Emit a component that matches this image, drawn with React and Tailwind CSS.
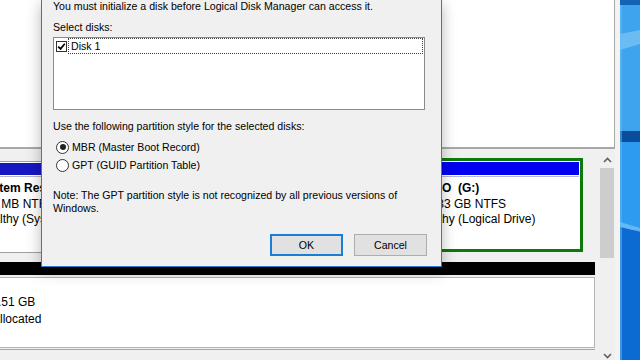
function Chevron({ down }) {
  return (
    <svg width="9" height="6" viewBox="0 0 9 6" className="block">
      <path
        d={down ? "M1 1 L4.5 4.5 L8 1" : "M1 5 L4.5 1.5 L8 5"}
        fill="none"
        stroke="#606060"
        strokeWidth="1.6"
      />
    </svg>
  );
}

function Desktop() {
  return (
    <svg width="20" height="360" viewBox="0 0 20 360" className="block">
      <rect width="20" height="360" fill="#0a62c4" />
      <rect y="0" width="20" height="5" fill="#1463b4" />
      <rect y="5" width="20" height="126" fill="#3fa4ee" />
      <polygon points="0,34 20,30 20,44 0,50" fill="#8fd0f8" opacity="0.55" />
      <rect y="131" width="20" height="11" fill="#0b4d9d" />
      <rect y="142" width="20" height="88" fill="#2d9bef" />
      <polygon points="0,222 20,228 20,232 0,227" fill="#7cc6f6" opacity="0.7" />
      <polygon points="0,227 20,232 20,360 0,360" fill="#0c6bd2" />
      <rect x="0" y="5" width="2" height="355" fill="#6cbcf2" opacity="0.5" />
    </svg>
  );
}

export default function App() {
  return (
    <div className="relative flex h-[360px] w-[640px] overflow-hidden bg-[#f0f0f0] font-['Liberation_Sans',Arial,sans-serif] text-black">
      {/* Disk Management window */}
      <div className="flex h-full w-[620px] shrink-0">
        <div className="flex w-[615px] shrink-0 flex-col">
          <div className="h-[149px] shrink-0 border-b-2 border-r border-[#a8a8a8] bg-white" />
          <div className="flex flex-1">
            <div className="w-[599px] shrink-0 pt-[9px]">
              {/* Disk 0 */}
              <div className="flex h-[94px] gap-[3px] text-[12px] leading-[15.5px]">
                <div className="-ml-[30px] mt-[3px] h-[92px] w-[437px] shrink-0 border border-[#a0a0a0] bg-white p-px">
                  <div className="h-[12px] bg-[#1717c2]" />
                  <div className="mt-px border-t border-[#b8b8b8] pl-[6px] pt-[4px]">
                    <div className="whitespace-nowrap">
                      <div className="font-bold">System Reserved</div>
                      <div>500 MB NTFS</div>
                      <div>Healthy (System, Active, Primary Partition)</div>
                    </div>
                  </div>
                </div>
                <div className="h-[94px] w-[173px] shrink-0 border-[3px] border-[#0b7a0b] bg-white p-px">
                  <div className="h-[13px] bg-[#0000f2]" />
                  <div className="mt-px border-t border-[#b8b8b8] pt-[4px]">
                    <div className="whitespace-nowrap">
                      <div className="whitespace-pre font-bold">VIDEO  (G:)</div>
                      <div>148.33 GB NTFS</div>
                      <div>Healthy (Logical Drive)</div>
                    </div>
                  </div>
                </div>
              </div>
              {/* Disk 1 */}
              <div className="mt-[10px] -ml-[10px] h-[13px] w-[605px] bg-black" />
              <div className="mt-[2px] -ml-[10px] h-[71px] w-[605px] border border-[#b4b4b4] bg-white text-[12px] leading-[16.5px]">
                <div className="-ml-[13px] whitespace-nowrap pt-[16px]">
                  <div>931.51 GB</div>
                  <div>Unallocated</div>
                </div>
              </div>
              <div className="mt-px h-px w-[595px] bg-[#a8a8a8]" />
            </div>
            {/* Scrollbar */}
            <div className="flex w-[16px] shrink-0 flex-col pt-[2px]">
              <div className="flex h-[17px] items-center justify-center">
                <Chevron />
              </div>
              <div className="mx-px h-[90px] bg-[#cdcdcd]" />
              <div className="mt-[89px] flex h-[17px] items-center justify-center">
                <Chevron down />
              </div>
            </div>
          </div>
        </div>
        <div className="w-[5px] shrink-0 bg-[#f3f3f3]" />
      </div>
      <div className="w-[20px] shrink-0">
        <Desktop />
      </div>

      {/* Initialize Disk dialog */}
      <div className="absolute left-[41px] top-0 h-[267px] w-[401px] border-x border-b border-[#2b7bd3] bg-[#f0f0f0] pl-[11px] text-[10.6px] leading-[13px] shadow-[0_4px_14px_rgba(0,0,0,0.28)]">
        <p className="whitespace-nowrap">
          You must initialize a disk before Logical Disk Manager can access it.
        </p>
        <p className="mt-[8px]">Select disks:</p>
        <div className="mt-[3px] h-[73px] w-[372px] border border-[#8a8a8a] bg-white">
          <div className="flex h-[16px] items-center">
            <div className="ml-[2px] flex h-[11px] w-[11px] shrink-0 items-center justify-center border border-[#333] bg-white">
              <svg width="9" height="9" viewBox="0 0 9 9" className="block">
                <path d="M1.2 4.6 L3.5 6.9 L7.8 1.8" fill="none" stroke="#000" strokeWidth="1.7" />
              </svg>
            </div>
            <div className="ml-px mr-px flex h-[16px] flex-1 items-center border border-dotted border-[#404040] pl-[2px]">
              Disk 1
            </div>
          </div>
        </div>
        <p className="mt-[10px]">Use the following partition style for the selected disks:</p>
        <div className="mt-[5px]">
          <div className="flex h-[18px] items-center">
            <div className="ml-[3px] flex h-[13px] w-[13px] items-center justify-center rounded-full border border-[#333] bg-white">
              <div className="h-[6px] w-[6px] rounded-full bg-[#222]" />
            </div>
            <span className="ml-[3px]">MBR (Master Boot Record)</span>
          </div>
          <div className="flex h-[18px] items-center">
            <div className="ml-[3px] h-[13px] w-[13px] rounded-full border border-[#333] bg-white" />
            <span className="ml-[3px]">GPT (GUID Partition Table)</span>
          </div>
        </div>
        <p className="mt-[15px] whitespace-nowrap">
          Note: The GPT partition style is not recognized by all previous versions of
          <br />
          Windows.
        </p>
        <div className="mt-[19px] flex gap-[11px] pl-[217px]">
          <button className="flex h-[22px] w-[73px] items-center justify-center border-2 border-[#1a7fd4] bg-[#e1e1e1]">
            OK
          </button>
          <button className="flex h-[22px] w-[73px] items-center justify-center border border-[#adadad] bg-[#e1e1e1]">
            Cancel
          </button>
        </div>
      </div>
    </div>
  );
}
